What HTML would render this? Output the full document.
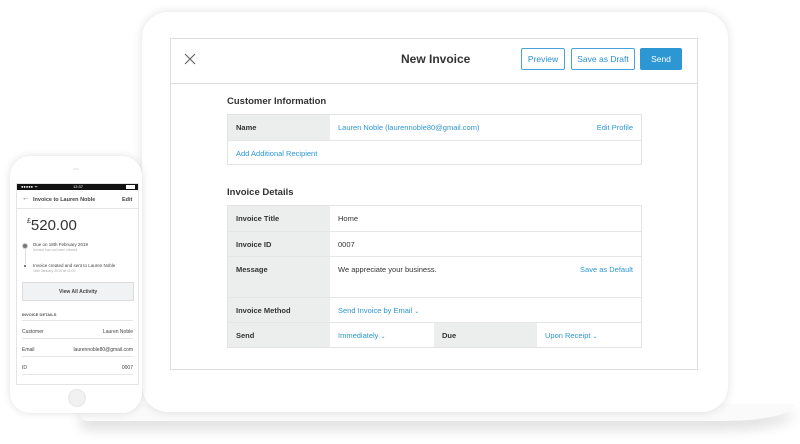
<!DOCTYPE html>
<html><head><style>
*{box-sizing:border-box;margin:0;padding:0}
body{width:800px;height:444px;background:#fff;position:relative;overflow:hidden;font-family:"Liberation Sans",sans-serif;color:#333}
.abs{position:absolute}
.lap{left:142px;top:12px;width:586px;height:400px;background:#fff;border-radius:26px;box-shadow:0 0 10px rgba(0,0,0,.12);}
.base{left:80px;top:404px;width:715px;height:17px;background:#fafafa;border-radius:0 0 70px 8px/0 0 17px 8px;box-shadow:0 9px 12px rgba(0,0,0,.12)}
.scr{left:170px;top:38px;width:528px;height:332px;border:1px solid #ddd;background:#fff}
.hdr{left:0;top:0;width:526px;height:45px;border-bottom:1px solid #ddd}
.btn{position:absolute;top:9px;height:22px;border:1px solid #4aa3d8;border-radius:2px;font-size:8.5px;color:#2a8fcc;text-align:center;line-height:20px}
.blue{color:#2e96d3}
.tbl{position:absolute;left:56px;width:415px;border:1px solid #e3e3e3}
.row{position:relative;border-top:1px solid #e6e6e6;height:25px}
.row:first-child{border-top:none}
.lab{position:absolute;left:0;top:0;bottom:0;width:102px;background:#eceded;font-weight:bold;font-size:7.5px;padding:8px 0 0 8px;color:#333}
.val{position:absolute;left:110px;top:8px;font-size:7.5px}
h3{position:absolute;left:56px;font-size:9.5px;font-weight:bold;color:#333}
.chev{font-size:6px}
.ph{left:10px;top:156px;width:132px;height:257px;background:#fff;border-radius:20px;box-shadow:0 0 8px rgba(0,0,0,.13)}
.ps{left:16px;top:183px;width:123px;height:202px;border:1px solid #e4e4e4;background:#fff;overflow:hidden}
.pt{position:absolute;font-size:5px;color:#444}
.pl{position:absolute;left:5px;right:5px;border-top:1px solid #e6e6e6}
</style></head><body>
<div class="abs base"></div>
<div class="abs lap"></div>
<div class="abs scr">
 <div class="abs hdr">
  <svg class="abs" style="left:13px;top:14px" width="12" height="12"><path d="M1 1L11 11M11 1L1 11" stroke="#666" stroke-width="1.2"/></svg>
  <div class="abs" style="left:230px;top:13px;font-size:12px;font-weight:bold;color:#333">New Invoice</div>
  <div class="btn" style="left:350px;width:44px">Preview</div>
  <div class="btn" style="left:400px;width:64px">Save as Draft</div>
  <div class="btn" style="left:469px;width:42px;background:#2d97d3;color:#fff;border-color:#2d97d3">Send</div>
 </div>
 <h3 style="top:57px">Customer Information</h3>
 <div class="tbl" style="top:75px">
  <div class="row"><div class="lab">Name</div><div class="val blue">Lauren Noble (laurennoble80@gmail.com)</div><div class="val blue" style="left:auto;right:8px">Edit Profile</div></div>
  <div class="row" style="height:24px"><div class="val blue" style="left:8px">Add Additional Recipient</div></div>
 </div>
 <h3 style="top:148px">Invoice Details</h3>
 <div class="tbl" style="top:166px">
  <div class="row"><div class="lab">Invoice Title</div><div class="val">Home</div></div>
  <div class="row"><div class="lab">Invoice ID</div><div class="val">0007</div></div>
  <div class="row" style="height:41px"><div class="lab">Message</div><div class="val">We appreciate your business.</div><div class="val blue" style="left:auto;right:8px">Save as Default</div></div>
  <div class="row"><div class="lab">Invoice Method</div><div class="val blue">Send Invoice by Email <span class="chev">&#8964;</span></div></div>
  <div class="row"><div class="lab">Send</div><div class="val blue">Immediately <span class="chev">&#8964;</span></div>
   <div class="lab" style="left:206px;width:103px">Due</div><div class="val blue" style="left:317px">Upon Receipt <span class="chev">&#8964;</span></div></div>
 </div>
</div>
<div class="abs ph"></div>
<div class="abs" style="left:73px;top:168px;width:6px;height:2px;background:#eee;border-radius:1px"></div>
<div class="abs" style="left:68px;top:389px;width:18px;height:18px;border-radius:50%;background:#f1f1f1;box-shadow:inset 0 0 2px rgba(0,0,0,.1)"></div>
<div class="abs ps">
 <div class="abs" style="left:0;top:0;width:123px;height:6px;background:#111"></div>
 <div class="pt" style="left:4px;top:0;color:#fff;font-size:4px">●●●●● ᯤ</div>
 <div class="pt" style="left:56px;top:0;color:#fff;font-size:4px">12:37</div>
 <div class="abs" style="left:109px;top:1px;width:9px;height:4px;background:#fff"></div>
 <div class="pt" style="left:5px;top:11px;font-size:7px">←</div>
 <div class="pt" style="left:16px;top:13px;font-size:5.5px;font-weight:bold">Invoice to Lauren Noble</div>
 <div class="pt blue" style="left:105px;top:13px;font-size:5.5px;font-weight:bold">Edit</div>
 <div class="pl" style="left:0;right:0;top:24px"></div>
 <div class="pt" style="left:10px;top:33px;font-size:15px;color:#333"><sup style="font-size:7px;vertical-align:7px">£</sup>520.00</div>
 <div class="abs" style="left:6px;top:60px;width:4px;height:4px;border-radius:50%;background:#777;box-shadow:0 0 0 1px #ccc"></div>
 <div class="abs" style="left:8px;top:64px;width:1px;height:16px;background:#ddd"></div>
 <div class="pt" style="left:16px;top:58px;font-size:4.5px">Due on 18th February 2019</div>
 <div class="pt" style="left:16px;top:64px;font-size:3.5px;color:#aaa">Invoice has not been viewed</div>
 <div class="abs" style="left:7px;top:81px;width:2px;height:2px;border-radius:50%;background:#555"></div>
 <div class="pt" style="left:16px;top:79px;font-size:4.5px">Invoice created and sent to Lauren Noble</div>
 <div class="pt" style="left:16px;top:85px;font-size:3.5px;color:#aaa">18th January 2019 at 11:00</div>
 <div class="abs" style="left:5px;top:98px;width:112px;height:19px;background:#f1f2f3;border:1px solid #ddd"></div>
 <div class="pt blue" style="left:42px;top:105px;font-weight:bold">View All Activity</div>
 <div class="pt" style="left:5px;top:128px;font-size:4px;font-weight:bold;color:#555">INVOICE DETAILS</div>
 <div class="pl" style="top:136px"></div>
 <div class="pt" style="left:5px;top:145px">Customer</div><div class="pt" style="right:5px;top:145px">Lauren Noble</div>
 <div class="pl" style="top:154px"></div>
 <div class="pt" style="left:5px;top:163px">Email</div><div class="pt" style="right:5px;top:163px">laurennoble80@gmail.com</div>
 <div class="pl" style="top:172px"></div>
 <div class="pt" style="left:5px;top:181px">ID</div><div class="pt" style="right:5px;top:181px">0007</div>
 <div class="pl" style="top:190px"></div>
</div>
</body></html>
